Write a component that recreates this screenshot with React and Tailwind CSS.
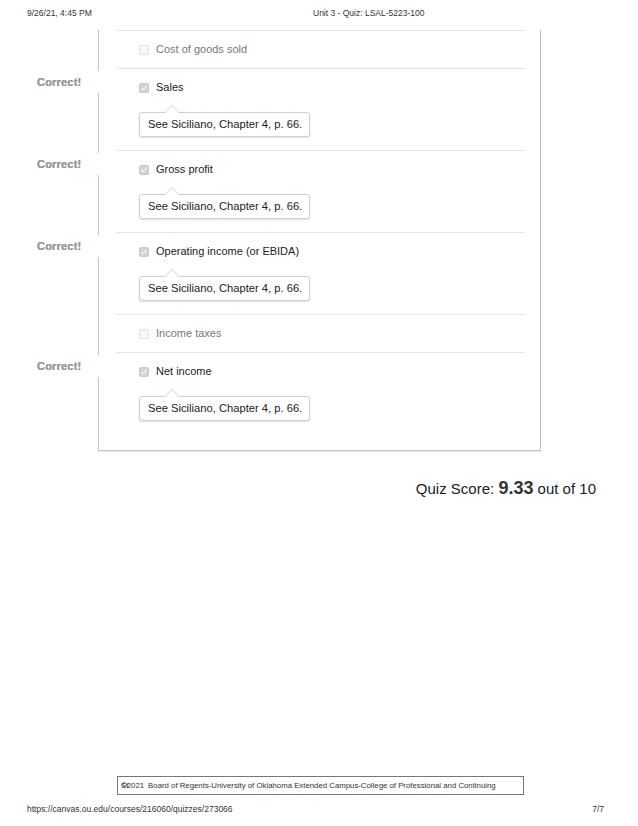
import React from "react";

const answers = [
  { label: "Cost of goods sold", checked: false },
  { label: "Sales", checked: true, correct: true, note: "See Siciliano, Chapter 4, p. 66." },
  { label: "Gross profit", checked: true, correct: true, note: "See Siciliano, Chapter 4, p. 66." },
  { label: "Operating income (or EBIDA)", checked: true, correct: true, note: "See Siciliano, Chapter 4, p. 66." },
  { label: "Income taxes", checked: false },
  { label: "Net income", checked: true, correct: true, note: "See Siciliano, Chapter 4, p. 66." },
];

function Checkbox({ checked }) {
  return checked ? (
    <span className="w-[10px] h-[10px] rounded-[2px] bg-[#d2d2d2] border border-[#c8c8c8] flex items-center justify-center shrink-0">
      <svg viewBox="0 0 10 10" className="w-[8px] h-[8px]">
        <path d="M2 5.2 L4.1 7.2 L8 2.8" fill="none" stroke="#f2f2f2" strokeWidth="1.6" strokeLinecap="round" strokeLinejoin="round" />
      </svg>
    </span>
  ) : (
    <span className="w-[10px] h-[10px] rounded-[2px] bg-[#f7f7f7] border border-[#e2e2e2] shrink-0" />
  );
}

function AnswerRow({ answer, last }) {
  return (
    <div className={`relative border-t border-[#e6e6e6] ${answer.note ? "pb-[13px]" : ""} ${last ? "pb-[16px]" : ""}`}>
      {answer.correct && (
        <div className="absolute left-[-83px] top-[2px] w-[69px] h-[22px] bg-white flex items-center pl-[4px]">
          <span className="text-[11px] font-bold text-[#9a9a9a] tracking-[0.2px] [text-shadow:0_0_0.6px_#777]">Correct!</span>
        </div>
      )}
      <div className={`flex items-center gap-[7px] pl-[23px] h-[37px] text-[11px] ${answer.checked ? "text-[#222]" : "text-[#777]"}`}>
        <Checkbox checked={answer.checked} />
        <span>{answer.label}</span>
      </div>
      {answer.note && (
        <div className="relative ml-[23px] mt-[6px] w-[171px] h-[25px] border border-[#cfcfcf] rounded-[3px] bg-white shadow-[0_1px_2px_rgba(0,0,0,0.12)] flex items-center pl-[8px] text-[11.2px] text-[#222]">
          <span className="absolute left-[24px] top-[-8px] w-0 h-0 border-l-[8px] border-r-[8px] border-b-[8px] border-l-transparent border-r-transparent border-b-[#cfcfcf]" />
          <span className="absolute left-[25px] top-[-7px] w-0 h-0 border-l-[7px] border-r-[7px] border-b-[7px] border-l-transparent border-r-transparent border-b-white" />
          {answer.note}
        </div>
      )}
    </div>
  );
}

export default function App() {
  return (
    <div className="w-[638px] h-[826px] bg-white flex flex-col font-['Liberation_Sans',Arial,sans-serif] text-[#222]">
      <div className="flex h-[30px] items-start pt-[7px] text-[8.5px] text-[#333]">
        <span className="w-[313px] pl-[27px]">9/26/21, 4:45 PM</span>
        <span>Unit 3 - Quiz: LSAL-5223-100</span>
      </div>

      <div className="ml-[98px] w-[443px] h-[421px] border-l border-r border-b border-[#c4c4c4] shadow-[0_1px_1px_rgba(0,0,0,0.08)]">
        <div className="ml-[17px] mr-[15px]">
          {answers.map((a, i) => (
            <AnswerRow key={i} answer={a} last={i === answers.length - 1} />
          ))}
        </div>
      </div>

      <div className="flex justify-end items-baseline pr-[42px] mt-[24px] text-[#222]">
        <span className="text-[15px]">Quiz Score:&nbsp;</span>
        <span className="text-[18px] font-bold text-[#333]">9.33</span>
        <span className="text-[15px]">&nbsp;out of 10</span>
      </div>

      <div className="flex-1" />

      <div className="ml-[117px] w-[407px] h-[19px] border border-[#777] flex items-center pl-[3px] text-[7.8px] text-[#333]">
        <span className="relative mr-[4px]">
          <span>©2021</span>
          <span className="absolute left-[0px] top-0">St</span>
        </span>
        <span>Board of Regents-University of Oklahoma Extended Campus-College of Professional and Continuing</span>
      </div>

      <div className="flex justify-between px-[27px] pt-[8px] pb-[10px] text-[8.5px] text-[#333]">
        <span>https://canvas.ou.edu/courses/216060/quizzes/273066</span>
        <span className="pr-[7px]">7/7</span>
      </div>
    </div>
  );
}
